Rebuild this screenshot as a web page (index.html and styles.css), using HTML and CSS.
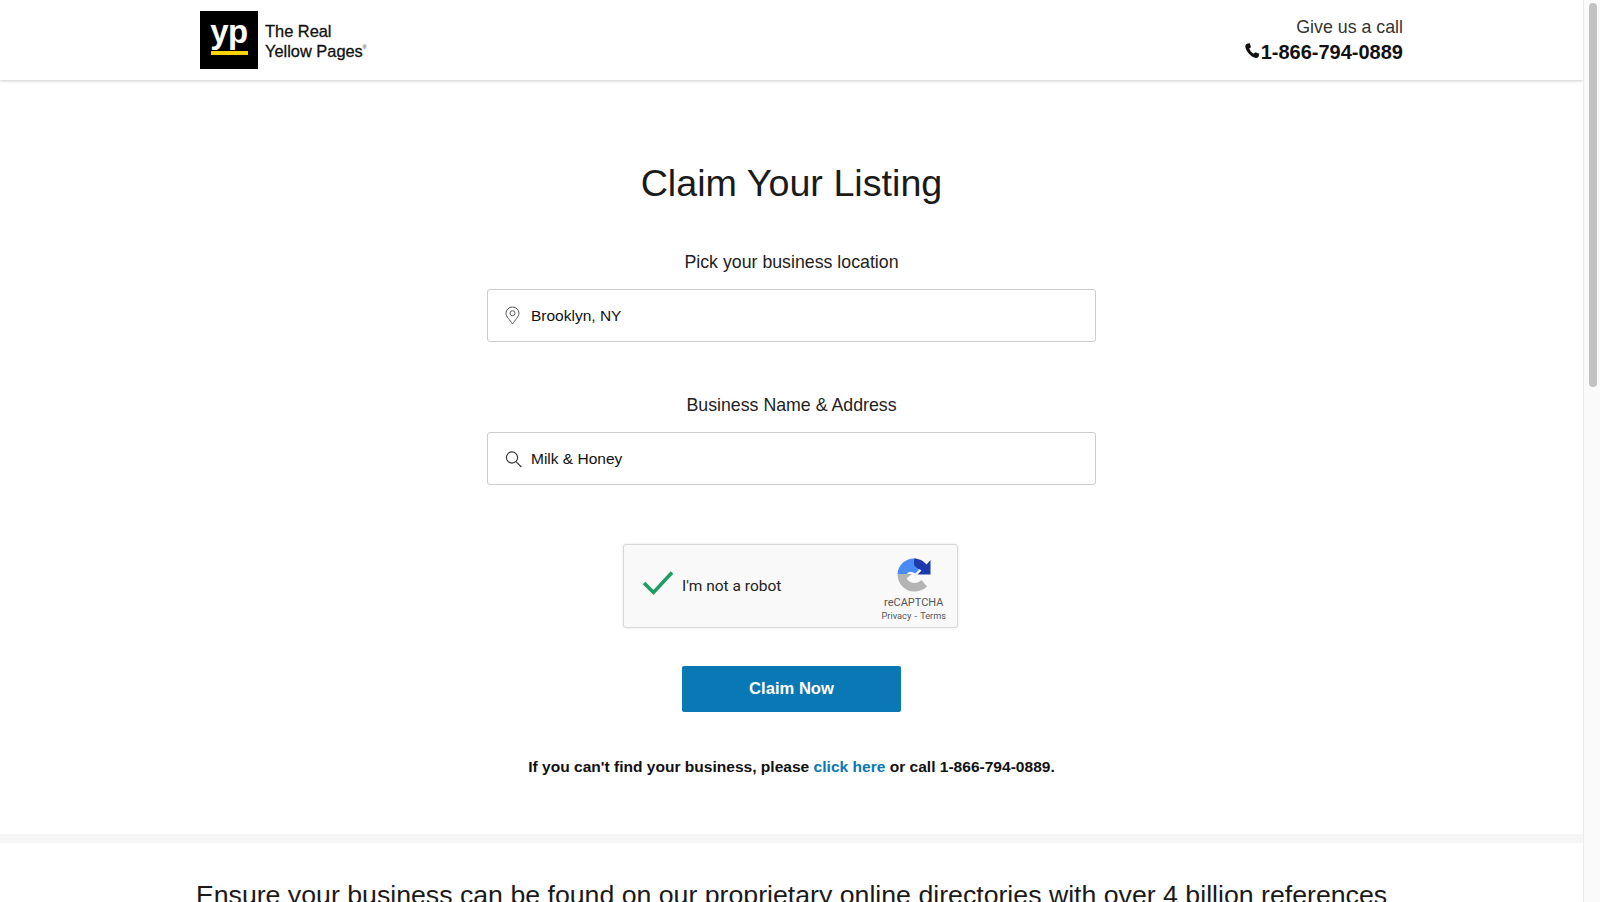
FILE: index.html
```html
<!DOCTYPE html>
<html lang="en">
<head>
  <meta charset="UTF-8">
  <title>Claim Your Listing - YP</title>
  <link rel="stylesheet" href="styles.css">
</head>
<body>
  <div class="page">
    <header class="topbar">
      <a class="logo" href="#">
        <span class="logo-box">
          <span class="logo-yp">yp</span>
          <span class="logo-line"></span>
        </span>
        <span class="logo-text">The Real<br>Yellow Pages<sup>®</sup></span>
      </a>
      <div class="call">
        <div class="call-label">Give us a call</div>
        <div class="call-number">
          <svg class="phone-icon" viewBox="0 0 16 16" width="16" height="16"><path d="M3.6 0.6 L5.8 0.2 L7 4.2 L5.2 5.6 C5.8 7.6 7.6 9.8 9.8 10.8 L11.4 9.2 L15.2 10.8 L14.8 13 C14.4 14.6 12.8 15.4 11.2 14.8 C6.4 13.2 2.6 9 1.4 4.2 C1 2.4 2 1 3.6 0.6 Z" fill="#111"/></svg>1-866-794-0889
        </div>
      </div>
    </header>

    <main class="claim">
      <h1>Claim Your Listing</h1>

      <form class="claim-form">
        <label class="field-label">Pick your business location</label>
        <div class="field">
          <svg class="field-icon" viewBox="0 0 18 19" width="18" height="19" fill="none" stroke="#555" stroke-width="1"><path d="M8.5 18 C6 14 2 10.8 2 7.2 A6.5 6.2 0 0 1 15 7.2 C15 10.8 11 14 8.5 18 Z"/><circle cx="8.5" cy="7.2" r="2.5"/></svg>
          <span>Brooklyn, NY</span>
        </div>

        <label class="field-label">Business Name &amp; Address</label>
        <div class="field">
          <svg class="field-icon" viewBox="0 0 18 19" width="18" height="19" fill="none" stroke="#333" stroke-width="1.1"><circle cx="8" cy="8.5" r="5.6"/><path d="M12 12.7 L17.4 18"/></svg>
          <span>Milk &amp; Honey</span>
        </div>

        <div class="captcha">
          <svg class="captcha-check" viewBox="0 0 32 26" width="32" height="26" fill="none"><path d="M2 13 L11.5 22.5 L30 2.5" stroke="#1e9e62" stroke-width="3.6"/></svg>
          <span class="captcha-text">I'm not a robot</span>
          <div class="captcha-brand">
            <svg viewBox="0 0 36 36" width="36" height="36">
              <path d="M18 1.5 C23 1.5 27.5 3.8 30.5 7.5 L34.5 3 L34.5 17.5 L21.5 17.5 L25.5 13.5 C23.5 12 21 11.5 18 12 Z" fill="#1c3aa9"/>
              <path d="M1.5 17 C2 8.5 9 1.5 18 1.5 L18 8 L23 13 L19 16.5 C16 14.5 12.5 14.5 10.5 17 Z" fill="#4a8af4"/>
              <path d="M1.5 17 L16 17 L10.5 21.5 C12.5 24.5 15.5 26 18.5 26 C21 26 23.5 25 25.5 23 L31 29.5 C27.5 32.8 23 34.5 18 34.5 C9 34.5 1.5 27 1.5 17 Z" fill="#b4b4b4"/>
            </svg>
            <div class="captcha-name">reCAPTCHA</div>
            <div class="captcha-links">Privacy - Terms</div>
          </div>
        </div>

        <button class="claim-btn" type="button">Claim Now</button>

        <p class="help">If you can't find your business, please <a href="#">click here</a> or call 1-866-794-0889.</p>
      </form>
    </main>

    <section class="more">
      <h2>Ensure your business can be found on our proprietary online directories with over 4 billion references</h2>
    </section>
  </div>

  <div class="scrollbar"><div class="scrollbar-thumb"></div></div>
</body>
</html>
```

FILE: styles.css
```css
html, body {
  height: 100%;
}

body {
  margin: 0;
  display: flex;
  height: 902px;
  overflow: hidden;
  font-family: 'Liberation Sans', Arial, sans-serif;
  color: #111;
  background: #fff;
}

.page {
  flex: 1;
  min-width: 0;
  overflow: hidden;
}

/* Scrollbar */
.scrollbar {
  width: 17px;
  flex-shrink: 0;
  padding: 3px 3px 0 5px;
  box-sizing: border-box;
  background: #fafafa;
  border-left: 1px solid #ececec;
}

.scrollbar-thumb {
  height: 384px;
  border-radius: 5px;
  background: #c2c2c2;
}

/* Header */
.topbar {
  height: 80px;
  box-sizing: border-box;
  padding: 0 180px 0 200px;
  display: flex;
  justify-content: space-between;
  align-items: center;
  box-shadow: 0 1px 3px rgba(0, 0, 0, 0.2);
}

.logo {
  display: flex;
  align-items: center;
  gap: 7px;
  color: #111;
  text-decoration: none;
}

.logo-box {
  width: 58px;
  height: 58px;
  background: #000;
  display: flex;
  flex-direction: column;
  align-items: center;
}

.logo-yp {
  color: #fff;
  font-size: 33px;
  line-height: 32px;
  font-weight: 700;
  margin-top: 5px;
  letter-spacing: -0.5px;
}

.logo-line {
  width: 37px;
  height: 4px;
  background: #ffd400;
  margin-top: 3px;
}

.logo-text {
  font-size: 16.4px;
  line-height: 20px;
  padding-top: 2px;
  -webkit-text-stroke: 0.3px #111;
}

.logo-text sup {
  font-size: 5px;
  line-height: 0;
  vertical-align: 8px;
  -webkit-text-stroke: 0;
}

.call {
  text-align: right;
}

.call-label {
  font-size: 17.8px;
  line-height: 24px;
  color: #333;
}

.call-number {
  font-size: 20px;
  line-height: 26px;
  font-weight: 700;
  display: flex;
  align-items: center;
}

.phone-icon {
  margin: -3px 1px 0 0;
}

/* Claim form */
.claim {
  text-align: center;
  padding-top: 81px;
  height: 673px;
}

.claim h1 {
  margin: 0;
  font-size: 37.7px;
  line-height: 44px;
  font-weight: 400;
  color: #1a1a1a;
}

.claim-form {
  width: 609px;
  margin: 0 auto;
  display: flex;
  flex-direction: column;
  align-items: center;
}

.field-label {
  font-size: 17.75px;
  line-height: 22px;
  margin-top: 46px;
  margin-bottom: 16px;
  color: #222;
}

.field + .field-label {
  margin-top: 52px;
}

.field {
  width: 100%;
  height: 53px;
  box-sizing: border-box;
  border: 1px solid #ccc;
  border-radius: 3px;
  display: flex;
  align-items: center;
  padding-left: 16px;
  gap: 9px;
  font-size: 15.5px;
}

.field-icon {
  flex-shrink: 0;
}

/* Captcha box */
.captcha {
  width: 335px;
  height: 84px;
  box-sizing: border-box;
  margin: 59px 2px 0 0;
  background: #f9f9f9;
  border: 1px solid #d8d8d8;
  border-radius: 3px;
  box-shadow: 0 0 3px rgba(0, 0, 0, 0.1);
  display: flex;
  align-items: center;
  padding: 0 11px 0 18px;
  font-family: Roboto, 'Liberation Sans', sans-serif;
}

.captcha-check {
  flex-shrink: 0;
  margin-top: -6px;
}

.captcha-text {
  font-size: 15.5px;
  margin-left: 8px;
  flex: 1;
  text-align: left;
  color: #222;
}

.captcha-brand {
  display: flex;
  flex-direction: column;
  align-items: center;
  margin-top: 6px;
}

.captcha-name {
  font-size: 11px;
  line-height: 14px;
  margin-top: 3px;
  color: #555;
}

.captcha-links {
  font-size: 9.2px;
  line-height: 12px;
  word-spacing: 1px;
  color: #555;
}

.claim-btn {
  width: 219px;
  height: 46px;
  margin-top: 38px;
  border: 0;
  border-radius: 2px;
  background: #0a78b4;
  color: #fff;
  font-family: inherit;
  font-size: 16.6px;
  font-weight: 700;
}

.help {
  margin: 45px 0 0;
  font-size: 15.55px;
  line-height: 20px;
  font-weight: 700;
  white-space: nowrap;
}

.help a {
  color: #0a78b4;
  text-decoration: none;
}

/* Lower section */
.more {
  border-top: 9px solid #f6f6f6;
  text-align: center;
  padding-top: 36px;
}

.more h2 {
  margin: 0;
  font-size: 26.7px;
  line-height: 32px;
  font-weight: 400;
  white-space: nowrap;
  color: #1a1a1a;
}
```
